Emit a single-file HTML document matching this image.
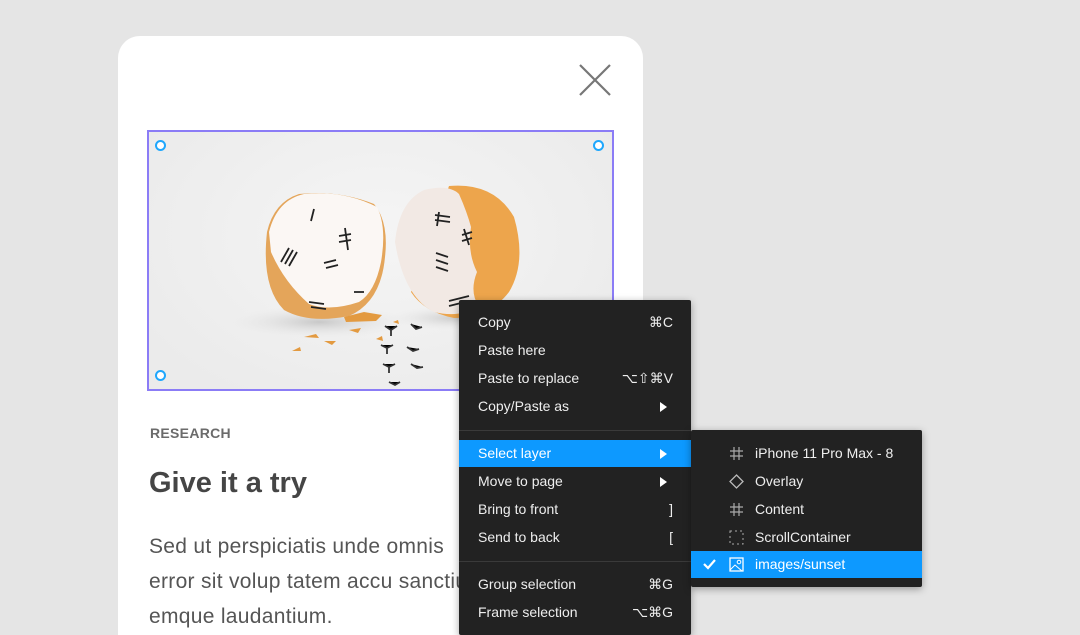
<!DOCTYPE html>
<html><head><meta charset="utf-8"><style>
*{margin:0;padding:0;box-sizing:border-box}
html,body{width:1080px;height:635px;overflow:hidden}
body{background:#e5e5e5;position:relative;font-family:"Liberation Sans",sans-serif}
.card{position:absolute;left:118px;top:36px;width:525px;height:599px;background:#fff;border-radius:22px 22px 0 0}
.img{position:absolute;left:147px;top:130px;width:467px;height:261px;border:2px solid #8b7cf6;background:radial-gradient(ellipse at 50% 40%,#f5f5f5,#ebebeb 85%);overflow:hidden}
.h{position:absolute;width:11px;height:11px;border:2px solid #1ea7fd;border-radius:50%;background:#fff}
.t{position:absolute;color:#555}
.menu{position:absolute;background:#222;color:#eee;font-size:14px;box-shadow:0 2px 8px rgba(0,0,0,.35);border-radius:2px}
.it{position:absolute;left:0;right:0;height:27px;line-height:27px;padding-left:19px}
.it .k{position:absolute;right:18px;top:0}
.sel{background:#0d99ff;color:#fff}
.sep{position:absolute;left:0;right:0;height:1px;background:#3a3a3a}
.arr{position:absolute;right:24px;top:9px;width:0;height:0;border-left:7px solid #fff;border-top:5px solid transparent;border-bottom:5px solid transparent}
.ic{position:absolute;left:38px;top:6px;width:15px;height:15px}
</style></head><body>
<div class="card"></div>
<svg style="position:absolute;left:578px;top:63px" width="34" height="34"><path d="M2 2L32 32M32 2L2 32" stroke="#777" stroke-width="2.2"/></svg>
<div class="img">
<svg width="467" height="261" style="position:absolute;left:0;top:0">
<defs><radialGradient id="sh"><stop offset="0" stop-color="#c8c8c8"/><stop offset="1" stop-color="#e8e8e8" stop-opacity="0"/></radialGradient></defs>
<ellipse cx="170" cy="190" rx="90" ry="16" fill="url(#sh)"/>
<ellipse cx="310" cy="186" rx="70" ry="12" fill="url(#sh)"/>
<path d="M118 100 Q125 70 150 62 Q190 58 225 72 Q240 90 236 125 Q232 170 200 184 Q160 192 135 178 Q112 155 118 100Z" fill="#e4a55a"/>
<path d="M120 100 Q128 68 155 62 Q195 58 228 75 Q238 95 232 130 Q226 160 210 170 Q180 180 160 172 Q135 150 122 120Z" fill="#fbf7f4"/>
<path d="M300 54 Q345 50 365 85 Q378 130 360 160 Q340 186 305 186 Q275 180 262 160 L300 54Z" fill="#eda54c"/>
<path d="M246 110 Q250 70 275 58 Q300 52 310 62 Q318 80 322 95 Q318 120 328 140 Q320 160 330 175 Q310 186 285 180 Q255 165 246 110Z" fill="#f2e9e4"/>
<g stroke="#222" stroke-width="1.8" fill="none"><path d="M165 77l-3 12M190 104l12-2M190 110l12-2M196 96l3 22M175 131l12-3M177 136l12-3M205 160l10 0M160 170l15 2M162 175l15 2M132 130l8-14M136 132l8-14M140 134l8-14M286 83l15 2M286 88l15 2M290 80l-2 14M313 103l10-3M313 109l10-3M315 97l5 16M287 121l12 4M287 128l12 4M287 135l12 4M300 169l20-5M300 174l20-5"/></g>
<path d="M195 185l20-5 18 3-6 6-30 1zM155 205l12-3 3 4zM175 209l12 0-4 4zM200 198l12-2-3 5zM143 219l8-4 1 4zM227 207l6-3 1 5zM244 190l5-2 1 4z" fill="#e39a40"/>
<g stroke="#333" stroke-width="1.8"><path d="M236 194l6 4 6-4M242 198v6M262 192l5 5 6-2M232 213l6 3 6-3M238 216v6M258 215l6 4 6-2M234 232l6 3 6-3M240 235v6M262 232l6 4 6-1M240 250l6 3 5-3"/></g>
</svg>
<div class="h" style="left:6px;top:8px"></div><div class="h" style="left:444px;top:8px"></div><div class="h" style="left:6px;top:238px"></div>
</div>
<div class="t" style="left:150px;top:425px;font-size:14px;font-weight:bold;color:#6b6b6b;letter-spacing:.3px">RESEARCH</div>
<div class="t" style="left:149px;top:467px;font-size:29px;font-weight:bold;color:#454545">Give it a try</div>
<div class="t" style="left:149px;top:529px;font-size:21px;line-height:35px;color:#555;white-space:nowrap;letter-spacing:.3px">Sed ut perspiciatis unde omnis<br>error sit volup tatem accu sanctium<br>emque laudantium.</div>
<div class="menu" style="left:459px;top:300px;width:232px;height:335px">
<div class="it" style="top:9px">Copy<span class="k">⌘C</span></div>
<div class="it" style="top:37px">Paste here</div>
<div class="it" style="top:65px">Paste to replace<span class="k">⌥⇧⌘V</span></div>
<div class="it" style="top:93px">Copy/Paste as<span class="arr"></span></div>
<div class="sep" style="top:130px"></div>
<div class="it sel" style="top:140px">Select layer<span class="arr"></span></div>
<div class="it" style="top:168px">Move to page<span class="arr"></span></div>
<div class="it" style="top:196px">Bring to front<span class="k">]</span></div>
<div class="it" style="top:224px">Send to back<span class="k">[</span></div>
<div class="sep" style="top:261px"></div>
<div class="it" style="top:271px">Group selection<span class="k">⌘G</span></div>
<div class="it" style="top:299px">Frame selection<span class="k">⌥⌘G</span></div>
</div>
<div class="menu" style="left:691px;top:430px;width:231px;height:157px">
<div class="it" style="top:10px;padding-left:64px"><svg class="ic" viewBox="0 0 15 15"><path d="M5 1v13M10 1v13M1 5h13M1 10h13" stroke="#aaa" stroke-width="1.2"/></svg>iPhone 11 Pro Max - 8</div>
<div class="it" style="top:38px;padding-left:64px"><svg class="ic" viewBox="0 0 15 15"><path d="M7.5 1L14 7.5 7.5 14 1 7.5Z" fill="none" stroke="#bbb" stroke-width="1.3"/></svg>Overlay</div>
<div class="it" style="top:66px;padding-left:64px"><svg class="ic" viewBox="0 0 15 15"><path d="M5 1v13M10 1v13M1 5h13M1 10h13" stroke="#aaa" stroke-width="1.2"/></svg>Content</div>
<div class="it" style="top:94px;padding-left:64px"><svg class="ic" viewBox="0 0 15 15"><rect x="1" y="1" width="13" height="13" fill="none" stroke="#aaa" stroke-dasharray="2 3"/></svg>ScrollContainer</div>
<div class="it sel" style="top:121px;padding-left:64px"><svg style="position:absolute;left:12px;top:8px" width="13" height="11"><path d="M1 5l4 4 7-8" stroke="#fff" stroke-width="2.2" fill="none"/></svg><svg class="ic" viewBox="0 0 15 15"><rect x="1" y="1" width="13" height="13" fill="none" stroke="#fff" stroke-width="1.3"/><path d="M1 13l5-5 7 6" stroke="#fff" fill="none"/><circle cx="10" cy="5" r="1.8" fill="none" stroke="#fff"/></svg>images/sunset</div>
</div>
</body></html>
